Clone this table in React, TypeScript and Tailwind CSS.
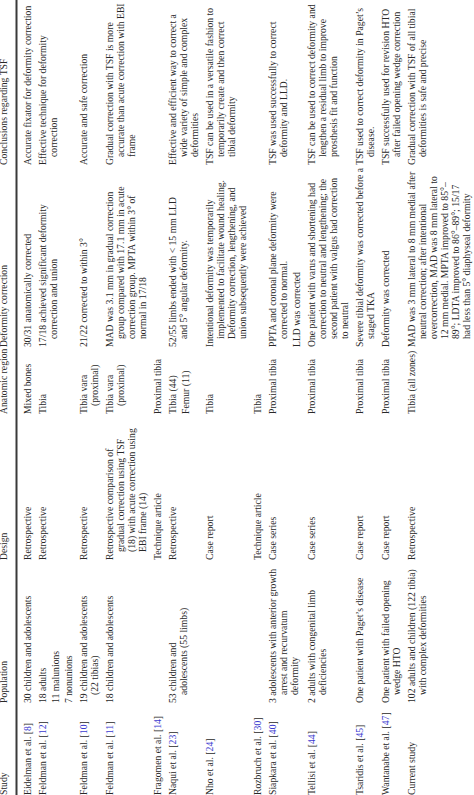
type Para = string[];
type Cell = Para[];

type Row = {
  study: string;
  refNo?: string;
  cells: Cell[];
};

const headers = [
  "Study",
  "Population",
  "Design",
  "Anatomic region",
  "Deformity correction",
  "Conclusions regarding TSF",
];

// each cell: paragraphs; each paragraph: its printed lines
const rows: Row[] = [
  {
    study: "Eidelman et al.",
    refNo: "8",
    cells: [
      [["30 children and adolescents"]],
      [["Retrospective"]],
      [["Mixed bones"]],
      [["30/31 anatomically corrected"]],
      [["Accurate fixator for deformity correction"]],
    ],
  },
  {
    study: "Feldman et al.",
    refNo: "12",
    cells: [
      [["18 adults"], ["11 malunions"], ["7 nonunions"]],
      [["Retrospective"]],
      [["Tibia"]],
      [["17/18 achieved significant deformity", "correction and union"]],
      [["Effective technique for deformity", "correction"]],
    ],
  },
  {
    study: "Feldman et al.",
    refNo: "10",
    cells: [
      [["19 children and adolescents", "(22 tibias)"]],
      [["Retrospective"]],
      [["Tibia vara", "(proximal)"]],
      [["21/22 corrected to within 3°"]],
      [["Accurate and safe correction"]],
    ],
  },
  {
    study: "Feldman et al.",
    refNo: "11",
    cells: [
      [["18 children and adolescents"]],
      [
        [
          "Retrospective comparison of",
          "gradual correction using TSF",
          "(18) with acute correction using",
          "EBI frame (14)",
        ],
      ],
      [["Tibia vara", "(proximal)"]],
      [
        [
          "MAD was 3.1 mm in gradual correction",
          "group compared with 17.1 mm in acute",
          "correction group. MPTA within 3° of",
          "normal in 17/18",
        ],
      ],
      [
        [
          "Gradual correction with TSF is more",
          "accurate than acute correction with EBI",
          "frame",
        ],
      ],
    ],
  },
  {
    study: "Fragomen et al.",
    refNo: "14",
    cells: [[], [["Technique article"]], [["Proximal tibia"]], [], []],
  },
  {
    study: "Naqui et al.",
    refNo: "23",
    cells: [
      [["53 children and", "adolescents (55 limbs)"]],
      [["Retrospective"]],
      [["Tibia (44)"], ["Femur (11)"]],
      [["52/55 limbs ended with < 15 mm LLD", "and 5° angular deformity."]],
      [
        [
          "Effective and efficient way to correct a",
          "wide variety of simple and complex",
          "deformities",
        ],
      ],
    ],
  },
  {
    study: "Nho et al.",
    refNo: "24",
    cells: [
      [],
      [["Case report"]],
      [["Tibia"]],
      [
        [
          "Intentional deformity was temporarily",
          "implemented to facilitate wound healing.",
          "Deformity correction, lengthening, and",
          "union subsequently were achieved",
        ],
      ],
      [
        [
          "TSF can be used in a versatile fashion to",
          "temporarily create and then correct",
          "tibial deformity",
        ],
      ],
    ],
  },
  {
    study: "Rozbruch et al.",
    refNo: "30",
    cells: [[], [["Technique article"]], [["Tibia"]], [], []],
  },
  {
    study: "Siapkara et al.",
    refNo: "40",
    cells: [
      [["3 adolescents with anterior growth", "arrest and recurvatum", "deformity"]],
      [["Case series"]],
      [["Proximal tibia"]],
      [
        ["PPTA and coronal plane deformity were", "corrected to normal."],
        ["LLD was corrected"],
      ],
      [["TSF was used successfully to correct", "deformity and LLD."]],
    ],
  },
  {
    study: "Tellisi et al.",
    refNo: "44",
    cells: [
      [["2 adults with congenital limb", "deficiencies"]],
      [["Case series"]],
      [["Proximal tibia"]],
      [
        [
          "One patient with varus and shortening had",
          "correction to neutral and lengthening; the",
          "second patient with valgus had correction",
          "to neutral",
        ],
      ],
      [
        [
          "TSF can be used to correct deformity and",
          "lengthen a residual limb to improve",
          "prosthesis fit and function",
        ],
      ],
    ],
  },
  {
    study: "Tsaridis et al.",
    refNo: "45",
    cells: [
      [["One patient with Paget’s disease"]],
      [["Case report"]],
      [["Proximal tibia"]],
      [["Severe tibial deformity was corrected before a", "staged TKA"]],
      [["TSF used to correct deformity in Paget’s", "disease."]],
    ],
  },
  {
    study: "Wantanabe et al.",
    refNo: "47",
    cells: [
      [["One patient with failed opening", "wedge HTO"]],
      [["Case report"]],
      [["Proximal tibia"]],
      [["Deformity was corrected"]],
      [
        [
          "TSF successfully used for revision HTO",
          "after failed opening wedge correction",
        ],
      ],
    ],
  },
  {
    study: "Current study",
    cells: [
      [["102 adults and children (122 tibia)", "with complex deformities"]],
      [["Retrospective"]],
      [["Tibia (all zones)"]],
      [
        [
          "MAD was 3 mm lateral to 8 mm medial after",
          "neutral correction; after intentional",
          "overcorrection, MAD was 8 mm lateral to",
          "12 mm medial. MPTA improved to 85°–",
          "89°; LDTA improved to 86°–89°; 15/17",
          "had less than 5° diaphyseal deformity",
        ],
      ],
      [
        [
          "Gradual correction with TSF of all tibial",
          "deformities is safe and precise",
        ],
      ],
    ],
  },
];

const cols = "grid grid-cols-[92px_143px_146px_67px_182px_200px]";

function CellText({ cell }: { cell: Cell }) {
  return (
    <div className="flex flex-col gap-[2px]">
      {cell.map((para, i) => (
        <div key={i}>
          {para.map((line, j) => (
            <div
              key={j}
              className={`whitespace-nowrap leading-[11px] ${j > 0 ? "pl-[8px]" : ""}`}
            >
              {line}
            </div>
          ))}
        </div>
      ))}
    </div>
  );
}

export default function App() {
  return (
    <div className="h-[795px] w-[474px] overflow-hidden bg-white">
      {/* the printed table is turned on its side */}
      <div className="w-[830px] origin-top-left translate-x-[-2.5px] translate-y-[795px] -rotate-90 font-['Liberation_Serif','Times_New_Roman',serif] text-[9.7px] text-[#282828]">
        <div className={`${cols} pb-[7px] leading-[11px]`}>
          {headers.map((h) => (
            <div key={h} className="whitespace-nowrap">
              {h}
            </div>
          ))}
        </div>
        <div className="h-[1.5px] bg-[#3a3a3a]" />
        {rows.map((row, i) => (
          <div key={i} className={`${cols} pt-[4px]`}>
            <div className="whitespace-nowrap leading-[11px]">
              {row.study}
              {row.refNo && (
                <>
                  {" "}[<span className="text-[#3b3bd0]">{row.refNo}</span>]
                </>
              )}
            </div>
            {row.cells.map((cell, k) => (
              <CellText key={k} cell={cell} />
            ))}
          </div>
        ))}
      </div>
    </div>
  );
}
